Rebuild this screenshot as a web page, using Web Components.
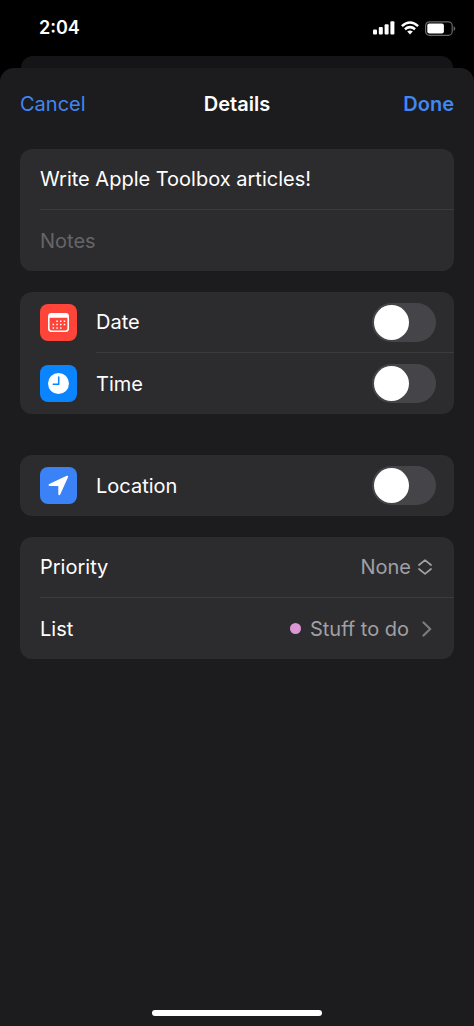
<!DOCTYPE html>
<html lang="en">
<head>
<meta charset="utf-8">
<meta name="viewport" content="width=device-width, initial-scale=1">
<title>Details</title>
<style>
  html { height: 100%; background: #000; }
  body {
    margin: 0;
    min-height: 100%;
    display: flex;
    color: #fff;
    font: 20px/28px Inter, "Liberation Sans", sans-serif;
    --card: #2c2c2e;
    --line: #3b3b3e;
    --accent: #4286f0;
    --muted: #a0a0a6;
  }
</style>
</head>
<body>
<reminder-screen></reminder-screen>

<template id="status-bar">
  <style>
    :host { display: flex; align-items: center; justify-content: space-between; height: 56px; padding: 0 18px 0 39px; }
    time { font-size: 18px; font-weight: 600; }
    .signs { display: flex; align-items: center; gap: 6px; }
    svg { display: block; }
  </style>
  <time>2:04</time>
  <div class="signs">
    <svg width="22" height="14" viewBox="0 0 22 14" fill="#fff" role="img" aria-label="Signal">
      <rect x="0" y="8.5" width="4" height="5" rx="1"/><rect x="5.8" y="6" width="4" height="7.5" rx="1"/>
      <rect x="11.6" y="3.3" width="4" height="10.2" rx="1"/><rect x="17.4" y="0.3" width="4" height="13.2" rx="1"/>
    </svg>
    <svg width="18" height="14" viewBox="0 0 18 14" fill="none" stroke="#fff" stroke-width="2.5" role="img" aria-label="Wi-Fi">
      <path d="M.9 5.1Q9-2.2 17.1 5.1M3.9 8.3Q9 4 14.1 8.3"/>
      <path d="M6.2 10.5Q9 8.4 11.8 10.5L9 13.4Z" fill="#fff" stroke="none"/>
    </svg>
    <svg width="31" height="15" viewBox="0 0 31 15" role="img" aria-label="Battery">
      <rect x=".6" y=".9" width="26.6" height="13.4" rx="3.8" fill="none" stroke="#69696b" stroke-width="1.2"/>
      <rect x="2.3" y="2.6" width="16.6" height="10" rx="2" fill="#fff"/>
      <path d="M28.6 5.3q1.7.7 1.7 2.3t-1.7 2.3z" fill="#69696b"/>
    </svg>
  </div>
</template>

<template id="sheet-header">
  <style>
    :host { display: grid; grid-template-columns: 1fr auto 1fr; align-items: center; height: 72px; }
    button { font: inherit; color: var(--accent); background: none; border: 0; padding: 0; justify-self: start; }
    .done { font-weight: 600; justify-self: end; }
    h1 { margin: 0; font: inherit; font-weight: 600; }
  </style>
  <button type="button">Cancel</button>
  <h1><slot></slot></h1>
  <button type="button" class="done">Done</button>
</template>

<template id="form-card">
  <style>
    :host { display: block; background: var(--card); border-radius: 12px; overflow: hidden; }
  </style>
  <slot></slot>
</template>

<template id="text-row">
  <style>
    :host { display: block; padding-left: 20px; }
    input {
      display: block; box-sizing: border-box; width: 100%; height: 61px; padding: 0 20px 0 0;
      font: inherit; color: inherit; background: none; border: 0; border-radius: 0; outline: 0;
    }
    :host([divided]) input { border-bottom: 1px solid var(--line); }
    input::placeholder { color: #656569; opacity: 1; }
  </style>
  <input type="text">
</template>

<template id="toggle-row">
  <style>
    :host { display: flex; align-items: center; gap: 19px; padding-left: 20px; }
    .tile { display: grid; place-items: center; width: 37px; height: 37px; border-radius: 8px; background: var(--tile); }
    .line { flex: 1; display: flex; align-items: center; box-sizing: border-box; height: 61px; padding-right: 18px; }
    :host([divided]) .line { border-bottom: 1px solid var(--line); }
    label { flex: 1; }
    input {
      appearance: none; margin: 0; box-sizing: border-box; width: 64px; height: 39px; padding: 2px;
      border-radius: 20px; background: #454549;
    }
    input::before { content: ""; display: block; width: 35px; height: 35px; border-radius: 50%; background: #fff; }
    input:checked { background: #30d158; }
    input:checked::before { margin-left: auto; }
  </style>
  <span class="tile"><slot name="icon"></slot></span>
  <div class="line">
    <label for="toggle"><slot></slot></label>
    <input type="checkbox" role="switch" id="toggle">
  </div>
</template>

<template id="priority-row">
  <style>
    :host { display: block; padding-left: 20px; }
    .line { display: flex; align-items: center; box-sizing: border-box; height: 61px; padding-right: 22px; border-bottom: 1px solid var(--line); }
    label { flex: 1; }
    select {
      appearance: none; field-sizing: content; margin: 0 7px 0 0; padding: 0; border: 0; outline: 0;
      font: inherit; color: var(--muted); background: none;
    }
    svg { display: block; pointer-events: none; }
  </style>
  <div class="line">
    <label for="level">Priority</label>
    <select id="level"><option>None</option><option>Low</option><option>Medium</option><option>High</option></select>
    <svg width="14" height="16" viewBox="0 0 14 16" fill="none" stroke="#a0a0a6" stroke-width="1.7" stroke-linecap="round" stroke-linejoin="round" aria-hidden="true">
      <path d="M1 6L7 1.2 13 6M1 10L7 14.8 13 10"/>
    </svg>
  </div>
</template>

<template id="link-row">
  <style>
    :host { display: block; }
    a { display: flex; align-items: center; height: 61px; padding: 0 22px 0 20px; color: inherit; text-decoration: none; }
    .label { flex: 1; }
    .dot { width: 11px; height: 11px; margin-right: 9px; border-radius: 50%; background: #dd96d4; }
    .value { color: var(--muted); margin-right: 13px; }
    svg { display: block; }
  </style>
  <a href="#lists">
    <span class="label"><slot></slot></span>
    <span class="dot"></span>
    <span class="value"><slot name="value"></slot></span>
    <svg width="10" height="16" viewBox="0 0 10 16" fill="none" stroke="#7b7b80" stroke-width="2.2" stroke-linecap="round" stroke-linejoin="round" aria-hidden="true">
      <path d="M1.5 1.5L8.2 8 1.5 14.5"/>
    </svg>
  </a>
</template>

<template id="reminder-screen">
  <style>
    :host { flex: 1; display: flex; flex-direction: column; }
    .behind { height: 12px; margin: 0 21px; border-radius: 12px 12px 0 0; background: #151517; }
    main { flex: 1; display: flex; flex-direction: column; padding: 0 20px 10px; border-radius: 14px 14px 0 0; background: #1c1c1e; }
    form { display: flex; flex-direction: column; gap: 21px; padding-top: 9px; }
    .schedule { margin-bottom: 20px; }
    .home { width: 170px; height: 6px; margin: auto auto 0; border-radius: 3px; background: #fff; }
    svg { display: block; }
  </style>
  <status-bar></status-bar>
  <div class="behind"></div>
  <main>
    <sheet-header>Details</sheet-header>
    <form>
      <form-card>
        <text-row divided label="Title" value="Write Apple Toolbox articles!"></text-row>
        <text-row label="Notes" placeholder="Notes"></text-row>
      </form-card>
      <form-card class="schedule">
        <toggle-row divided style="--tile: #ff453a">
          <svg slot="icon" width="21" height="19" viewBox="0 0 21 19" aria-hidden="true">
            <rect x=".8" y=".8" width="19.4" height="17.4" rx="2.6" fill="none" stroke="#fff" stroke-width="1.6"/>
            <path d="M.8 4.8V3Q.8.6 3.2.6H17.8Q20.2.6 20.2 3V4.8Z" fill="#fff"/>
            <path d="M8.3 8.2h9M4.6 11.6h12.6M4.6 15h9" fill="none" stroke="#fff" stroke-width="1.5" stroke-dasharray="1.5 2.2"/>
          </svg>
          Date
        </toggle-row>
        <toggle-row style="--tile: #0a84ff">
          <svg slot="icon" width="21" height="21" viewBox="0 0 21 21" aria-hidden="true">
            <circle cx="10.5" cy="10.5" r="10.5" fill="#fff"/>
            <path d="M10.7 4v7.3H5.2" fill="none" stroke="#0a84ff" stroke-width="1.5" stroke-linecap="round" stroke-linejoin="round"/>
          </svg>
          Time
        </toggle-row>
      </form-card>
      <form-card>
        <toggle-row style="--tile: #3b82f6">
          <svg slot="icon" width="21" height="21" viewBox="0 0 21 21" aria-hidden="true">
            <path d="M1.6 9.9L19.2 1.7 11.3 19.2V9.9Z" fill="#fff" stroke="#fff" stroke-width="2" stroke-linejoin="round"/>
          </svg>
          Location
        </toggle-row>
      </form-card>
      <form-card>
        <priority-row></priority-row>
        <link-row>List<span slot="value">Stuff to do</span></link-row>
      </form-card>
    </form>
    <div class="home"></div>
  </main>
</template>

<script>
  class TemplateElement extends HTMLElement {
    constructor() {
      super();
      const template = document.getElementById(this.localName);
      this.attachShadow({ mode: "open" }).append(template.content.cloneNode(true));
    }
  }

  class TextRow extends TemplateElement {
    connectedCallback() {
      const input = this.shadowRoot.querySelector("input");
      input.value = this.getAttribute("value") || "";
      input.placeholder = this.getAttribute("placeholder") || "";
      input.setAttribute("aria-label", this.getAttribute("label"));
    }
  }

  customElements.define("status-bar", class extends TemplateElement {});
  customElements.define("sheet-header", class extends TemplateElement {});
  customElements.define("form-card", class extends TemplateElement {});
  customElements.define("text-row", TextRow);
  customElements.define("toggle-row", class extends TemplateElement {});
  customElements.define("priority-row", class extends TemplateElement {});
  customElements.define("link-row", class extends TemplateElement {});
  customElements.define("reminder-screen", class extends TemplateElement {});
</script>
</body>
</html>
